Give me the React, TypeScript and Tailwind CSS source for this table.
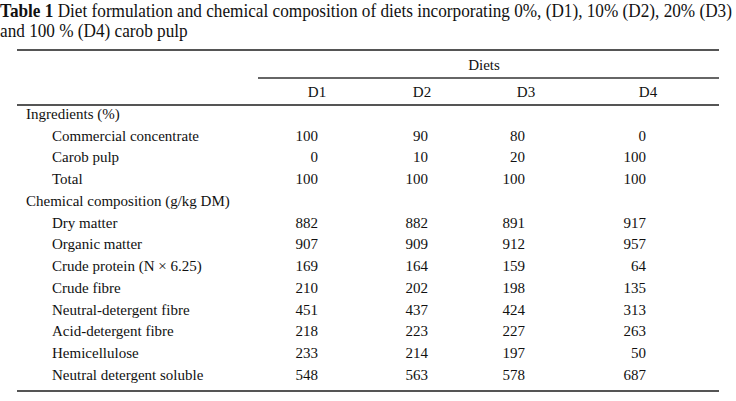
const serif = { fontFamily: '"Liberation Serif", "Times New Roman", serif' };

type Row = { label: string; indent?: boolean; values?: string[] };

const rows: Row[] = [
  { label: 'Ingredients (%)' },
  { label: 'Commercial concentrate', indent: true, values: ['100', '90', '80', '0'] },
  { label: 'Carob pulp', indent: true, values: ['0', '10', '20', '100'] },
  { label: 'Total', indent: true, values: ['100', '100', '100', '100'] },
  { label: 'Chemical composition (g/kg DM)' },
  { label: 'Dry matter', indent: true, values: ['882', '882', '891', '917'] },
  { label: 'Organic matter', indent: true, values: ['907', '909', '912', '957'] },
  { label: 'Crude protein (N × 6.25)', indent: true, values: ['169', '164', '159', '64'] },
  { label: 'Crude fibre', indent: true, values: ['210', '202', '198', '135'] },
  { label: 'Neutral-detergent fibre', indent: true, values: ['451', '437', '424', '313'] },
  { label: 'Acid-detergent fibre', indent: true, values: ['218', '223', '227', '263'] },
  { label: 'Hemicellulose', indent: true, values: ['233', '214', '197', '50'] },
  { label: 'Neutral detergent soluble', indent: true, values: ['548', '563', '578', '687'] }
];

const valuePadding = ['pr-[59px]', 'pr-[39px]', 'pr-[60px]', 'pr-[73px]'];

export default function App() {
  return (
    <div className="h-[401px] w-[736px] overflow-hidden bg-white text-[#111]" style={serif}>
      <div className="origin-top-left scale-x-[0.905] whitespace-nowrap pt-[1px] text-[19px] leading-[20px]">
        <div>
          <span className="font-bold">Table 1</span> Diet formulation and chemical composition of diets incorporating 0%, (D1), 10% (D2), 20% (D3)
        </div>
        <div>and 100 % (D4) carob pulp</div>
      </div>

      <div className="ml-[17px] mt-[8px] w-[702px] text-[15px]">
        <div className="h-[2px] bg-[#555]" />
        <div className="grid h-[26px] grid-cols-[240px_462px] items-center pt-[2px]">
          <div />
          <div className="pr-[8px] text-center">Diets</div>
        </div>
        <div className="ml-[241px] h-[2px] bg-[#666]" />
        <div className="grid h-[25px] grid-cols-[240px_120px_90px_118px_134px] items-center pt-[1px]">
          <div />
          <div className="text-center">D1</div>
          <div className="text-center">D2</div>
          <div className="text-center">D3</div>
          <div className="pr-[8px] text-center">D4</div>
        </div>
        <div className="h-[2px] bg-[#555]" />

        <div className="-mt-[3px]">
          {rows.map((row) => (
            <div key={row.label} className="grid h-[21.75px] grid-cols-[240px_120px_90px_118px_134px] items-center leading-[18px]">
              <div className={row.indent ? 'pl-[35px]' : 'pl-[9px]'}>{row.label}</div>
              {row.values
                ? row.values.map((value, index) => (
                    <div key={index} className={`text-right ${valuePadding[index]}`}>
                      {value}
                    </div>
                  ))
                : null}
            </div>
          ))}
        </div>
        <div className="mt-[4px] h-[2px] bg-[#555]" />
      </div>
    </div>
  );
}
